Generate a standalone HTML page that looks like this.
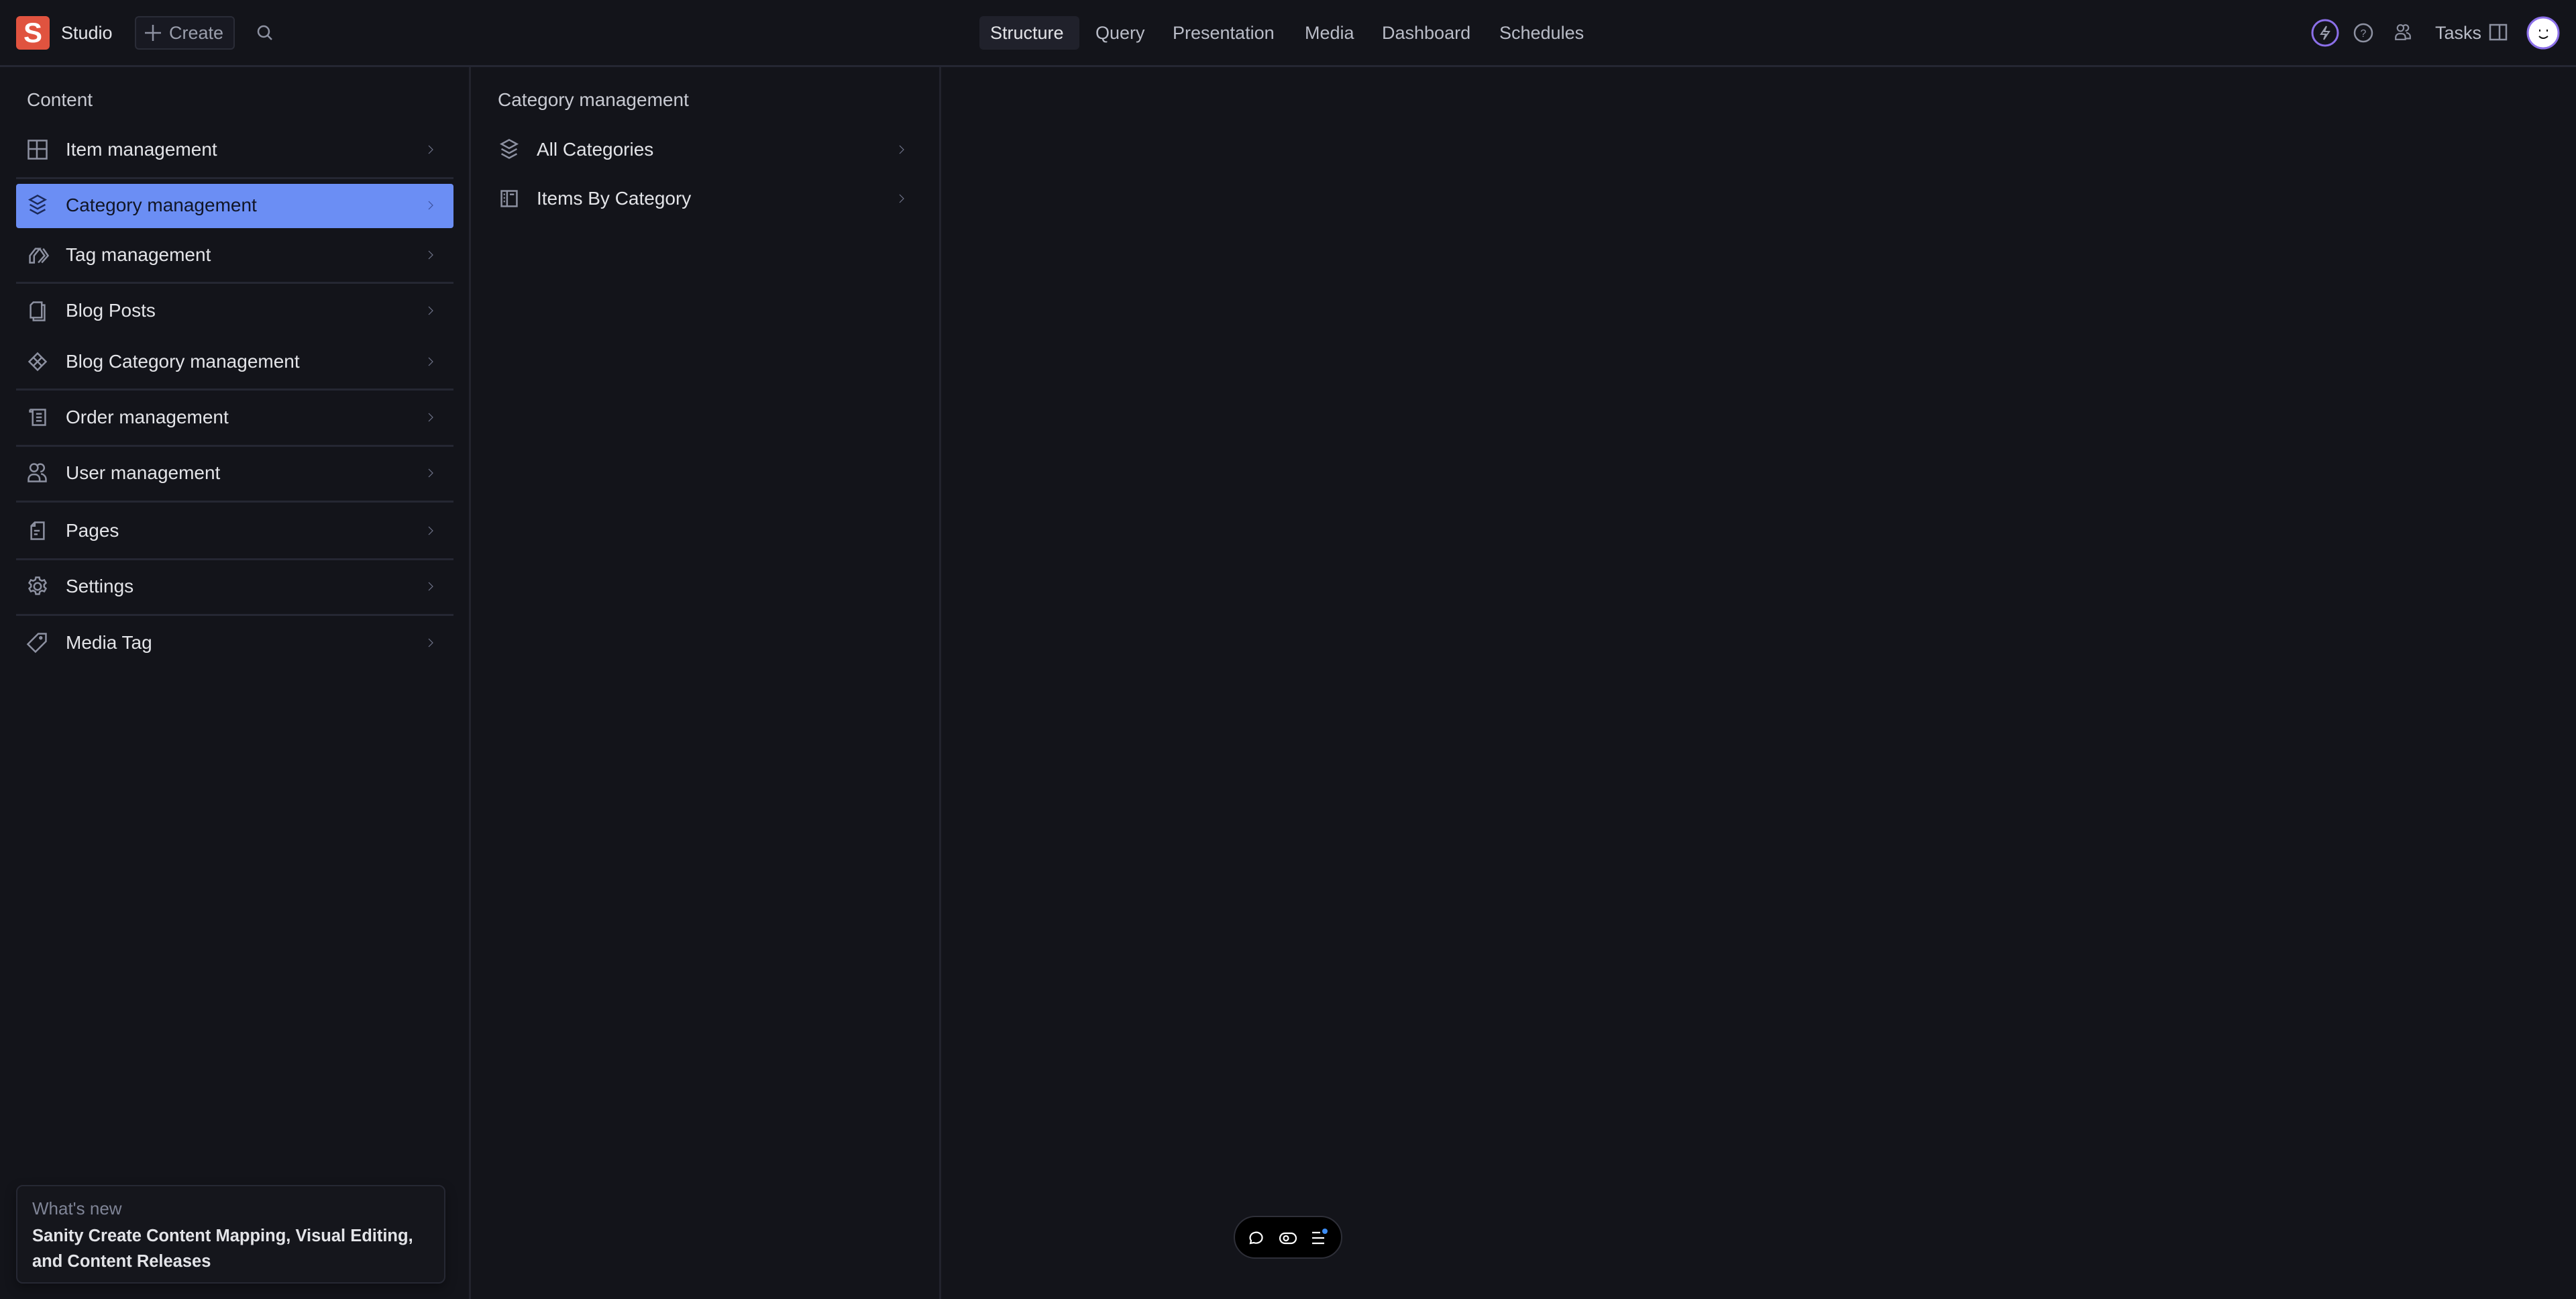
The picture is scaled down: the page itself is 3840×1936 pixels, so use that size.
<!DOCTYPE html>
<html><head><meta charset="utf-8"><style>
*{margin:0;padding:0;box-sizing:border-box}
body{width:3840px;height:1936px;background:#13141a;font-family:"Liberation Sans",sans-serif;color:#e3e4e8;position:relative;overflow:hidden}
.a{position:absolute}
.t{position:absolute;font-size:28px;line-height:36px;white-space:nowrap}
.ic{position:absolute;width:52px;height:52px}
.ic path,.ic rect,.ic circle{fill:none;stroke:#8d91a1;stroke-width:1.2}
.sep{position:absolute;left:24px;width:652px;height:3px;background:#252733}
.chev{position:absolute;width:30px;height:30px}
.chev path{fill:none;stroke:#70748a;stroke-width:1.2}
.nav{position:absolute;top:31px;font-size:27px;line-height:36px;color:#b9bcc7}
</style></head><body>
<!-- header -->
<div class="a" style="left:0;top:97px;width:3840px;height:3px;background:#252733"></div>
<div class="a" style="left:24px;top:24px;width:50px;height:50px;background:#e0533f;border-radius:6px;color:#fff;font-weight:bold;font-size:42px;line-height:50px;text-align:center">S</div>
<div class="t" style="left:91px;top:31px;font-size:27px">Studio</div>
<div class="a" style="left:201px;top:24px;width:149px;height:50px;border:2px solid #2a2c37;border-radius:6px;background:#181922"></div>
<svg class="a" style="left:210px;top:31px" width="36" height="36" viewBox="0 0 36 36"><path d="M18 6V30M6 18H30" stroke="#8d91a1" stroke-width="2.5"/></svg>
<div class="t" style="left:252px;top:31px;font-size:27px;color:#9a9eac">Create</div>
<svg class="a" style="left:377px;top:31px" width="36" height="36" viewBox="0 0 36 36"><circle cx="16" cy="16" r="8" fill="none" stroke="#8d91a1" stroke-width="2.5"/><path d="M22 22L28 28" stroke="#8d91a1" stroke-width="2.5"/></svg>
<div class="a" style="left:1460px;top:24px;width:149px;height:50px;background:#20212b;border-radius:6px"></div>
<div class="nav" style="left:1476px;color:#e3e4e8">Structure</div>
<div class="nav" style="left:1633px">Query</div>
<div class="nav" style="left:1748px">Presentation</div>
<div class="nav" style="left:1945px">Media</div>
<div class="nav" style="left:2060px">Dashboard</div>
<div class="nav" style="left:2235px">Schedules</div>
<svg class="a" style="left:3445px;top:28px" width="42" height="42" viewBox="0 0 42 42"><circle cx="21" cy="21" r="19" fill="none" stroke="#8b6fe8" stroke-width="3"/><path d="M23 11L15 23H22L19 31L27 19H20Z" fill="none" stroke="#9a9eac" stroke-width="2"/></svg>
<svg class="a" style="left:3508px;top:34px" width="30" height="30" viewBox="0 0 30 30"><circle cx="15" cy="15" r="13" fill="none" stroke="#8d91a1" stroke-width="2.5"/><text x="15" y="21" font-size="16" fill="#8d91a1" text-anchor="middle" font-family="Liberation Sans">?</text></svg>
<svg class="a" style="left:3564px;top:30px" width="36" height="36" viewBox="0 0 25 25"><path d="M10 5a3.2 3.2 0 1 1-.01 0M5 20v-2c0-2.5 2-4 4-4h2c2.5 0 4 1.5 4 4v2zM13 6a3 3 0 1 1 2 5M16 13c2.5.5 4 2 4 4v2h-5" fill="none" stroke="#8d91a1" stroke-width="1.5"/></svg>
<div class="t" style="left:3630px;top:31px;font-size:27px;color:#b9bcc7">Tasks</div>
<svg class="a" style="left:3710px;top:34px" width="28" height="28" viewBox="0 0 28 28"><rect x="2" y="3" width="24" height="22" fill="none" stroke="#8d91a1" stroke-width="2.5"/><path d="M16 3V25" stroke="#8d91a1" stroke-width="2.5"/></svg>
<svg class="a" style="left:3766px;top:24px" width="50" height="50" viewBox="0 0 50 50"><circle cx="25" cy="25" r="23" fill="#fff" stroke="#8b6fe8" stroke-width="3"/><path d="M20 20v3M31 20v3M19 30q6 6 13 0" fill="none" stroke="#111" stroke-width="2"/></svg>

<div class="a" style="left:699px;top:100px;width:3px;height:1836px;background:#22232d"></div>
<div class="a" style="left:1400px;top:100px;width:3px;height:1836px;background:#22232d"></div>

<!-- pane 1 -->
<div class="t" style="left:40px;top:131px;color:#c8cad2">Content</div>
<div class="a" style="left:24px;top:274px;width:652px;height:66px;background:#6b8ef4;border-radius:4px"></div>

<svg class="ic" style="left:30px;top:197px" viewBox="0 0 25 25"><rect x="6" y="6" width="13" height="13"/><path d="M6 12h13M12 6v13"/></svg>
<div class="t" style="left:98px;top:205px">Item management</div>
<div class="sep" style="top:264px"></div>
<svg class="ic" style="left:30px;top:280px" viewBox="0 0 25 25"><path d="M12.5 5.5L18 8.5 12.5 11.5 7 8.5ZM7 12l5.5 3 5.5-3M7 15.5l5.5 3 5.5-3" style="stroke:#1c2a5a"/></svg>
<div class="t" style="left:98px;top:288px;color:#111526">Category management</div>
<svg class="ic" style="left:30px;top:354px" viewBox="0 0 25 25"><path d="M7 18v-5l4-5h3l-4 5v5zM14 8l3.5 5-4.5 5M16.5 8l3.5 5-4.5 5"/></svg>
<div class="t" style="left:98px;top:362px">Tag management</div>
<div class="sep" style="top:420px"></div>
<svg class="ic" style="left:30px;top:437px" viewBox="0 0 25 25"><path d="M9.5 6.5h6v11h-8V8.5zM15.5 8.5h2v11h-8v-2"/></svg>
<div class="t" style="left:98px;top:445px">Blog Posts</div>
<svg class="ic" style="left:30px;top:513px" viewBox="0 0 25 25"><path d="M12.5 6.5l6 6-6 6-6-6zM9.5 9.5l6 6M15.5 9.5l-6 6"/></svg>
<div class="t" style="left:98px;top:521px">Blog Category management</div>
<div class="sep" style="top:579px"></div>
<svg class="ic" style="left:30px;top:596px" viewBox="0 0 25 25"><path d="M7 7h2v11h9V7H9M7 7v1.5h2M11.5 10h4M11.5 12.5h4M11.5 15h4"/></svg>
<div class="t" style="left:98px;top:604px">Order management</div>
<div class="sep" style="top:663px"></div>
<svg class="ic" style="left:30px;top:679px" viewBox="0 0 25 25"><path d="M10 6a2.7 2.7 0 1 1-.01 0M6 18.5v-1.5c0-2 1.5-3.5 3.5-3.5h1c2 0 3.5 1.5 3.5 3.5v1.5zM12.5 7a2.7 2.7 0 1 1 2 4.5M15 13c2 .5 3.5 2 3.5 4v1.5h-4"/></svg>
<div class="t" style="left:98px;top:687px">User management</div>
<div class="sep" style="top:746px"></div>
<svg class="ic" style="left:30px;top:765px" viewBox="0 0 25 25"><path d="M10.5 6.5h6.5v12H8v-9.5zM10.5 6.5v2.5H8M10 12.5h4M10 15h2.5"/></svg>
<div class="t" style="left:98px;top:773px">Pages</div>
<div class="sep" style="top:832px"></div>
<svg class="ic" style="left:30px;top:848px" viewBox="0 0 25 25"><circle cx="12.5" cy="12.5" r="2.5"/><path d="M11.3 6h2.4l.4 1.7 1.5.8 1.7-.6 1.2 2.1-1.3 1.2v1.6l1.3 1.2-1.2 2.1-1.7-.6-1.5.8-.4 1.7h-2.4l-.4-1.7-1.5-.8-1.7.6-1.2-2.1 1.3-1.2v-1.6L6.5 10l1.2-2.1 1.7.6 1.5-.8z"/></svg>
<div class="t" style="left:98px;top:856px">Settings</div>
<div class="sep" style="top:915px"></div>
<svg class="ic" style="left:30px;top:932px" viewBox="0 0 25 25"><path d="M5.5 13.5l7.5-7.5h5.5v5.5l-7.5 7.5zM15.5 9a.7.7 0 1 1 0-.01"/></svg>
<div class="t" style="left:98px;top:940px">Media Tag</div>

<svg class="chev" style="left:627px;top:208px" viewBox="0 0 30 30"><path d="M12 9l6 6-6 6"/></svg>
<svg class="chev" style="left:627px;top:291px" viewBox="0 0 30 30"><path d="M12 9l6 6-6 6" style="stroke:#3b4f9a"/></svg>
<svg class="chev" style="left:627px;top:365px" viewBox="0 0 30 30"><path d="M12 9l6 6-6 6"/></svg>
<svg class="chev" style="left:627px;top:448px" viewBox="0 0 30 30"><path d="M12 9l6 6-6 6"/></svg>
<svg class="chev" style="left:627px;top:524px" viewBox="0 0 30 30"><path d="M12 9l6 6-6 6"/></svg>
<svg class="chev" style="left:627px;top:607px" viewBox="0 0 30 30"><path d="M12 9l6 6-6 6"/></svg>
<svg class="chev" style="left:627px;top:690px" viewBox="0 0 30 30"><path d="M12 9l6 6-6 6"/></svg>
<svg class="chev" style="left:627px;top:776px" viewBox="0 0 30 30"><path d="M12 9l6 6-6 6"/></svg>
<svg class="chev" style="left:627px;top:859px" viewBox="0 0 30 30"><path d="M12 9l6 6-6 6"/></svg>
<svg class="chev" style="left:627px;top:943px" viewBox="0 0 30 30"><path d="M12 9l6 6-6 6"/></svg>

<div class="a" style="left:24px;top:1766px;width:640px;height:147px;border:2px solid #262833;border-radius:10px;background:#15161c;box-shadow:0 6px 16px rgba(0,0,0,.35)"></div>
<div class="t" style="left:48px;top:1783px;font-size:26px;color:#7f8496">What's new</div>
<div class="t" style="left:48px;top:1824px;font-size:25.5px;font-weight:bold;color:#e3e4e8">Sanity Create Content Mapping, Visual Editing,</div>
<div class="t" style="left:48px;top:1862px;font-size:25.5px;font-weight:bold;color:#e3e4e8">and Content Releases</div>

<!-- pane 2 -->
<div class="t" style="left:742px;top:131px;color:#c8cad2">Category management</div>
<svg class="ic" style="left:733px;top:197px" viewBox="0 0 25 25"><path d="M12.5 5.5L18 8.5 12.5 11.5 7 8.5ZM7 12l5.5 3 5.5-3M7 15.5l5.5 3 5.5-3"/></svg>
<div class="t" style="left:800px;top:205px">All Categories</div>
<svg class="ic" style="left:733px;top:270px" viewBox="0 0 25 25"><rect x="7" y="7" width="11" height="11"/><path d="M11 7v11M13 9.5h3M8.5 9.5h1M8.5 12h1M8.5 14.5h1"/></svg>
<div class="t" style="left:800px;top:278px">Items By Category</div>
<svg class="chev" style="left:1329px;top:208px" viewBox="0 0 30 30"><path d="M12 9l6 6-6 6"/></svg>
<svg class="chev" style="left:1329px;top:281px" viewBox="0 0 30 30"><path d="M12 9l6 6-6 6"/></svg>

<div class="a" style="left:1839px;top:1812px;width:162px;height:64px;background:#000;border:2px solid #2e2f38;border-radius:32px"></div>
<svg class="a" style="left:1856px;top:1828px" width="130" height="34" viewBox="0 0 130 34"><path d="M8 25l1-4a9 8 0 1 1 4 3z" fill="none" stroke="#fff" stroke-width="2.2"/><rect x="52" y="10" width="24" height="15" rx="7.5" fill="none" stroke="#fff" stroke-width="2.2"/><circle cx="61" cy="17.5" r="3.5" fill="none" stroke="#fff" stroke-width="2.2"/><path d="M100 9h12M100 17h18M100 25h18" stroke="#fff" stroke-width="2.2"/><circle cx="119" cy="7" r="4" fill="#3b8cf5"/></svg>
</body></html>
